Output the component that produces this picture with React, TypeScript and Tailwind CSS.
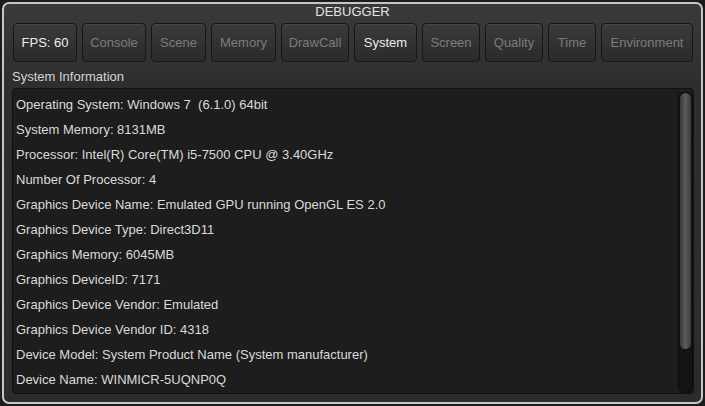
import React from 'react';

const TABS: { label: string; w: number; active?: boolean }[] = [
    { label: 'FPS: 60', w: 64, active: true },
    { label: 'Console', w: 64 },
    { label: 'Scene', w: 55 },
    { label: 'Memory', w: 65 },
    { label: 'DrawCall', w: 68 },
    { label: 'System', w: 63, active: true },
    { label: 'Screen', w: 58 },
    { label: 'Quality', w: 58 },
    { label: 'Time', w: 48 },
    { label: 'Environment', w: 92 },
];

const ROWS = [
    'Operating System: Windows 7  (6.1.0) 64bit',
    'System Memory: 8131MB',
    'Processor: Intel(R) Core(TM) i5-7500 CPU @ 3.40GHz',
    'Number Of Processor: 4',
    'Graphics Device Name: Emulated GPU running OpenGL ES 2.0',
    'Graphics Device Type: Direct3D11',
    'Graphics Memory: 6045MB',
    'Graphics DeviceID: 7171',
    'Graphics Device Vendor: Emulated',
    'Graphics Device Vendor ID: 4318',
    'Device Model: System Product Name (System manufacturer)',
    'Device Name: WINMICR-5UQNP0Q',
];

export default function App() {
    return (
        <div
            className="w-[705px] h-[406px] bg-[#1b1d1c] p-[2px]"
            style={{ fontFamily: '"Liberation Sans", Arial, sans-serif' }}
        >
            <div className="h-full flex flex-col rounded-[7px] border-2 border-[#c6c6c6] bg-gradient-to-b from-[#3a3a3a] via-[#2e2e2e] via-[20%] to-[#2b2b2b] overflow-hidden">
                {/* タイトル */}
                <div className="h-[16px] text-center text-[13px] leading-[16px] text-[#e4e4e4]">DEBUGGER</div>

                {/* タブ */}
                <div className="flex gap-[5px] mt-[3px] pl-[9px]">
                    {TABS.map(t => (
                        <div
                            key={t.label}
                            style={{ width: t.w }}
                            className={`h-[39px] flex items-center justify-center rounded-[4px] border border-[#161616] bg-gradient-to-b from-[#3b3b3b] to-[#2a2a2a] shadow-[inset_0_1px_0_#474747] text-[13px] whitespace-nowrap ${t.active ? 'text-[#ececec]' : 'text-[#7c7c7c]'}`}
                        >
                            {t.label}
                        </div>
                    ))}
                </div>

                <div className="mt-[7px] pl-[8px] h-[16px] text-[13px] leading-[16px] text-[#d4d4d4]">System Information</div>

                {/* 情報リスト */}
                <div className="relative flex-1 mt-[3px] ml-[8px] mr-[7px] mb-[8px] rounded-[4px] border border-[#101010] bg-[#1d1d1d] pt-[3px] pl-[3px]">
                    {ROWS.map(r => (
                        <div key={r} className="h-[25px] leading-[25px] text-[13px] text-[#dadada] whitespace-pre">{r}</div>
                    ))}
                    <div className="absolute right-[0px] top-[3px] bottom-[0px] w-[15px] rounded-[6px] bg-[#141414] border border-[#0c0c0c]">
                        <div className="h-[256px] mx-[1px] rounded-[6px] bg-gradient-to-r from-[#3a3a3a] via-[#5c5c5c] to-[#3a3a3a]" />
                    </div>
                </div>
            </div>
        </div>
    );
}
